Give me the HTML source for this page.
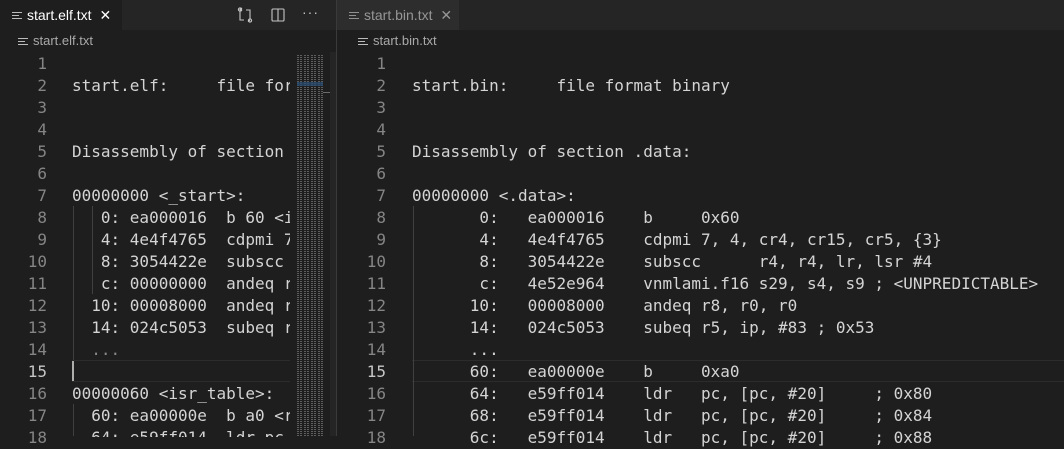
<!DOCTYPE html>
<html><head><meta charset="utf-8"><style>
*{margin:0;padding:0;box-sizing:border-box}
body{width:1064px;height:436px;background:#1e1e1e;overflow:hidden;position:relative;font-family:"Liberation Sans",sans-serif}
.tabbar{position:absolute;top:0;height:30px;background:#252526}
.tab{position:absolute;top:0;height:30px;font-size:13px;line-height:30px}
.crumb{position:absolute;top:33px;font-size:13px;color:#a9a9a9}
.ln,.tx{position:absolute;font-family:"DejaVu Sans Mono","Liberation Mono",monospace;font-size:16px;line-height:22px;white-space:pre}
.ln{text-align:right;width:40px;color:#858585}
.tx{color:#d4d4d4}
.guide{position:absolute;width:1px;background:#404040}
.hl{position:absolute;height:22px;border-top:1px solid #2c2c2c;border-bottom:1px solid #2c2c2c}
.ic{display:inline-block;width:10px;height:8px;margin-right:5px;vertical-align:middle;
background:linear-gradient(#bbb,#bbb) 0 0/10px 1px no-repeat,linear-gradient(#bbb,#bbb) 0 3px/7px 1px no-repeat,linear-gradient(#bbb,#bbb) 0 6px/10px 1px no-repeat}
</style></head><body>
<div class="tabbar" style="left:0;width:336px"></div>
<div class="tabbar" style="left:337px;width:727px"></div>
<div style="position:absolute;left:336px;top:0;width:1px;height:436px;background:#3a3a3a"></div>
<div class="tab" style="left:0;width:122px;background:#1e1e1e;color:#fff;padding-left:12px;font-size:14px"><span class="ic"></span>start.elf.txt <span style="margin-left:4px">✕</span></div>
<div class="tab" style="left:337px;width:122px;background:#2d2d2d;color:#969696;padding-left:12px;font-size:14px"><span class="ic" style="opacity:.7"></span>start.bin.txt <span style="margin-left:4px">✕</span></div>
<svg style="position:absolute;left:236px;top:6px" width="18" height="18" viewBox="0 0 18 18" fill="none" stroke="#c5c5c5" stroke-width="1.1"><circle cx="4" cy="3.5" r="1.6"/><circle cx="14" cy="14.5" r="1.6"/><path d="M4 5v9h4M14 13V4h-4M6 2l-2 1.5 2 1.5M12 15.5l2-1.5"/></svg>
<svg style="position:absolute;left:270px;top:7px" width="16" height="16" viewBox="0 0 16 16" fill="none" stroke="#c5c5c5" stroke-width="1.1"><rect x="2" y="2" width="12" height="12" rx="1"/><path d="M8 2v12"/></svg>
<div style="position:absolute;left:302px;top:4px;color:#c5c5c5;font-size:14px;letter-spacing:1px">···</div>
<div class="crumb" style="left:18px"><span class="ic"></span>start.elf.txt</div>
<div class="crumb" style="left:358px"><span class="ic"></span>start.bin.txt</div>

<div class="hl" style="left:72px;top:360px;width:218px"></div>
<div class="hl" style="left:412px;top:360px;width:652px"></div>
<div style="position:absolute;left:72px;top:361px;width:2px;height:20px;background:#aeafad"></div>

<div class="guide" style="left:73px;top:206px;height:154px"></div>
<div class="guide" style="left:92px;top:206px;height:88px"></div>
<div class="guide" style="left:73px;top:404px;height:32px"></div>
<div class="guide" style="left:413px;top:206px;height:230px"></div>

<div class="ln" style="left:7px;top:53px">1
2
3
4
5
6
7
8
9
10
11
12
13
14
<span style="color:#c6c6c6">15</span>
16
17
18</div>
<div class="tx" style="left:72px;top:53px;width:218px;overflow:hidden;height:384px">
start.elf:     file format elf32-littlearm


Disassembly of section .text:

00000000 &lt;_start&gt;:
   0: ea000016  b 60 &lt;isr_table&gt;
   4: 4e4f4765  cdpmi 7, 4, cr4
   8: 3054422e  subscc r4, r4
   c: 00000000  andeq r0, r0
  10: 00008000  andeq r8, r0
  14: 024c5053  subeq r5, ip
  <span style="color:#888">...</span>

00000060 &lt;isr_table&gt;:
  60: ea00000e  b a0 &lt;reset&gt;
  64: e59ff014  ldr pc, [pc]</div>

<div style="position:absolute;left:290px;top:52px;width:46px;height:384px;background:#1e1e1e"></div>
<div style="position:absolute;left:297px;top:54px;width:26px;height:382px;opacity:.4;
background:repeating-linear-gradient(#1e1e1e 0 1px,transparent 1px 2px),
repeating-linear-gradient(90deg,#bbb 0 2px,transparent 2px 3px,#bbb 3px 5px,transparent 5px 7px);"></div>
<div style="position:absolute;left:297px;top:82px;width:26px;height:4px;background:#264f78;opacity:.7"></div>
<div style="position:absolute;left:323px;top:92px;width:13px;height:1px;background:#6b6b6b"></div>
<div style="position:absolute;left:330px;top:52px;width:6px;height:384px;background:#252526"></div>

<div class="ln" style="left:346px;top:53px">1
2
3
4
5
6
7
8
9
10
11
12
13
14
<span style="color:#c6c6c6">15</span>
16
17
18</div>
<div class="tx" style="left:412px;top:53px">
start.bin:     file format binary


Disassembly of section .data:

00000000 &lt;.data&gt;:
       0:   ea000016    b     0x60
       4:   4e4f4765    cdpmi 7, 4, cr4, cr15, cr5, {3}
       8:   3054422e    subscc      r4, r4, lr, lsr #4
       c:   4e52e964    vnmlami.f16 s29, s4, s9 ; &lt;UNPREDICTABLE&gt;
      10:   00008000    andeq r8, r0, r0
      14:   024c5053    subeq r5, ip, #83 ; 0x53
      ...
      60:   ea00000e    b     0xa0
      64:   e59ff014    ldr   pc, [pc, #20]     ; 0x80
      68:   e59ff014    ldr   pc, [pc, #20]     ; 0x84
      6c:   e59ff014    ldr   pc, [pc, #20]     ; 0x88</div>
</body></html>
